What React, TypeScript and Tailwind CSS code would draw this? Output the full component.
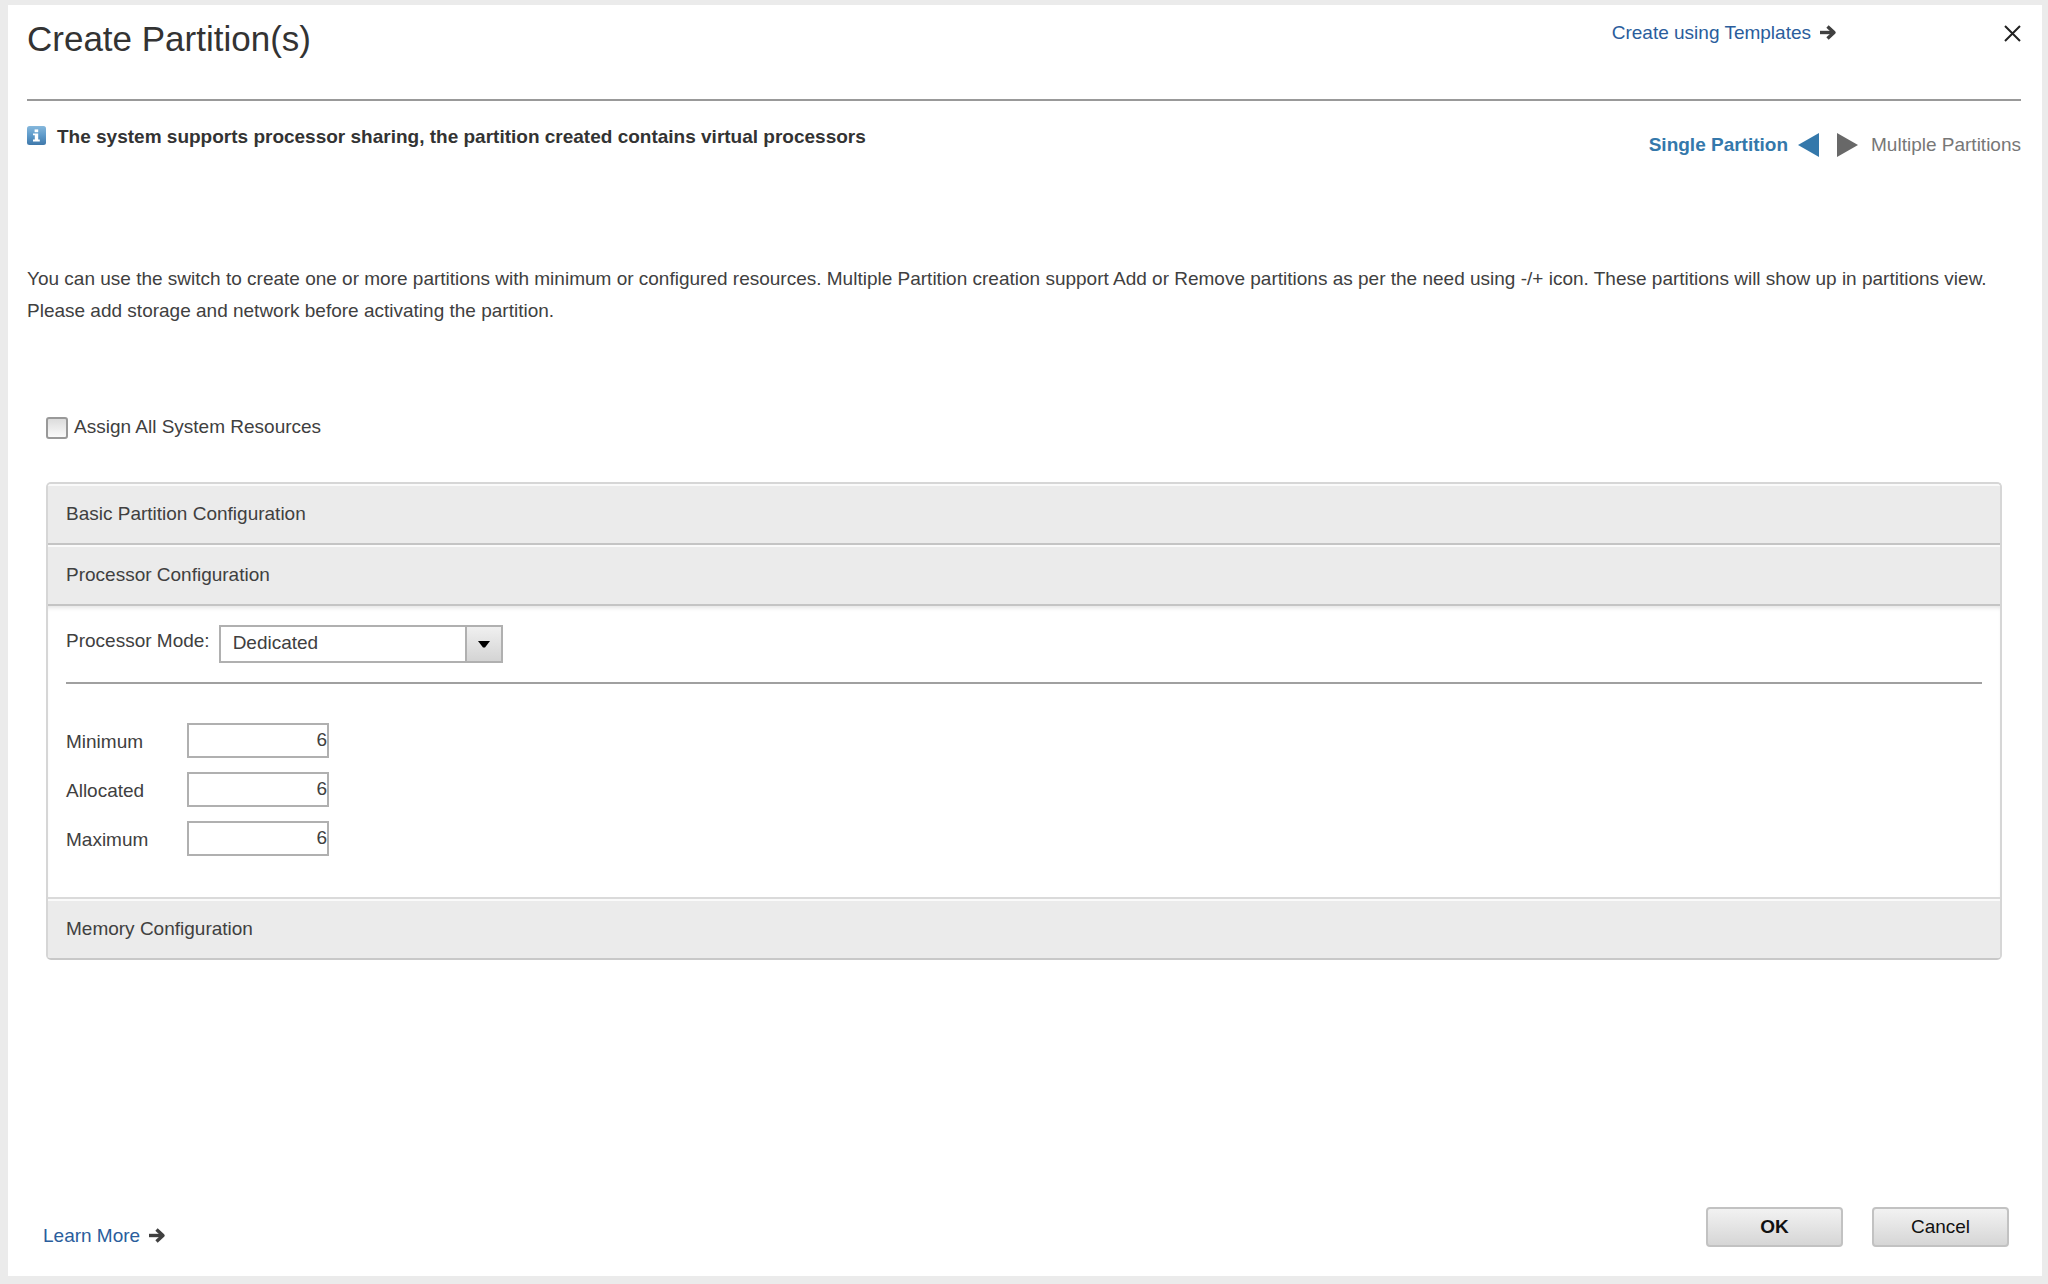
import { ReactNode, useState } from 'react'
import clsx from 'clsx'

const SECTIONS = ['Basic Partition Configuration', 'Processor Configuration', 'Memory Configuration']

const ArrowIcon = () => (
  <svg width="17" height="16" viewBox="0 0 17 16" fill="none" stroke="#404040" strokeWidth="3.4">
    <path d="M0 7.5H14" />
    <path d="M7.5 1.5L14 7.5L7.5 13.5" strokeLinejoin="round" />
  </svg>
)

const InfoIcon = () => (
  <svg className="mt-px" width="19" height="19" viewBox="0 0 19 19">
    <defs>
      <linearGradient id="info-fill" x1="0" y1="0" x2="0" y2="1">
        <stop offset="0" stopColor="#86b8dc" />
        <stop offset="0.5" stopColor="#5e9aca" />
        <stop offset="1" stopColor="#3f78aa" />
      </linearGradient>
    </defs>
    <rect width="19" height="19" rx="2.5" fill="url(#info-fill)" />
    <rect x="7.6" y="3.4" width="3.6" height="2.8" fill="#fff" />
    <path d="M6 7.4H11.2V13.6H12.8V15.6H6V13.6H7.8V9.3H6Z" fill="#fff" />
  </svg>
)

const Section = ({
  title,
  open,
  onToggle,
  children
}: {
  title: string
  open: boolean
  onToggle: () => void
  children?: ReactNode
}) => {
  return (
    <section className={clsx('border-b-2 last:border-b-0', open ? 'border-[#dadada]' : 'border-[#c4c4c4]')}>
      <h2>
        <button
          type="button"
          aria-expanded={open}
          onClick={onToggle}
          className="block w-full border-t-2 border-[#fafafa] bg-[#ebebeb] px-[18px] pt-4 pb-[17px] text-left"
        >
          {title}
        </button>
      </h2>
      {open && children && (
        <div className="border-t-2 border-[#c4c4c4] bg-white px-[18px] pt-[19px] pb-[41px] shadow-[inset_0_4px_4px_-2px_#e4e4e4]">
          {children}
        </div>
      )}
    </section>
  )
}

const ProcessorForm = () => {
  const [mode, setMode] = useState('Dedicated')
  const [values, setValues] = useState({ Minimum: '6', Allocated: '6', Maximum: '6' })

  return (
    <>
      <div className="flex items-start">
        <label htmlFor="mode" className="pt-1">
          Processor Mode:
        </label>
        <div className="relative ml-[9px] w-[284px]">
          <select
            id="mode"
            value={mode}
            onChange={(e) => setMode(e.target.value)}
            className="block h-[38px] w-full appearance-none border-2 border-[#b0b0b0] bg-white pb-[2px] pl-3 leading-6"
          >
            <option>Dedicated</option>
            <option>Shared</option>
          </select>
          <span className="pointer-events-none absolute inset-y-[2px] right-[2px] flex w-9 items-center justify-center border-l-2 border-[#b0b0b0] bg-linear-to-b from-[#f0f0f0] to-[#d4d4d4]">
            <svg width="12" height="7" viewBox="0 0 12 7">
              <path d="M0 0H12L7 6.5H5Z" fill="#000" />
            </svg>
          </span>
        </div>
      </div>
      <hr className="mt-[19px] mb-[39px] border-t-2 border-[#a0a0a0]" />
      <div className="flex flex-col gap-[14px]">
        {(Object.keys(values) as (keyof typeof values)[]).map((name) => (
          <div key={name} className="flex items-center">
            <label htmlFor={name} className="w-[121px] pt-[2px]">
              {name}
            </label>
            <input
              id={name}
              type="text"
              value={values[name]}
              onChange={(e) => setValues({ ...values, [name]: e.target.value })}
              className="h-[35px] w-[142px] border-2 border-[#b0b0b0] bg-white pb-px text-right"
            />
          </div>
        ))}
      </div>
    </>
  )
}

const App = () => {
  const [openSection, setOpenSection] = useState('Processor Configuration')
  const [single, setSingle] = useState(true)

  return (
    <div className="flex min-h-screen flex-col bg-[#ebebeb] pt-[5px] pr-[6px] pb-2 pl-2 font-['Liberation_Sans',Arial,sans-serif] text-[19px] leading-6 text-[#404040]">
      <main className="flex flex-1 flex-col bg-white pr-[21px] pl-[19px]">
        <header className="flex h-[96px] items-start border-b-2 border-[#999] pt-[14px]">
          <h1 className="text-[35px] leading-10 text-[#333]">Create Partition(s)</h1>
          <a href="#templates" className="mt-[2px] ml-auto flex items-center gap-[9px] text-[#2a5d9c]">
            Create using Templates
            <ArrowIcon />
          </a>
          <button type="button" aria-label="Close" className="mt-[6px] ml-[167px]">
            <svg width="17" height="17" viewBox="0 0 17 17" fill="none" stroke="#222" strokeWidth="2">
              <path d="M1 1L16 16M16 1L1 16" />
            </svg>
          </button>
        </header>

        <div className="flex items-start justify-between pt-6">
          <p className="flex items-start gap-[11px] font-bold text-[#333]">
            <InfoIcon />
            The system supports processor sharing, the partition created contains virtual processors
          </p>
          <div className="flex items-center pt-2">
            <button
              type="button"
              onClick={() => setSingle(true)}
              className={clsx('flex items-center gap-[10px]', single ? 'font-bold text-[#3478ab]' : 'text-[#777]')}
            >
              Single Partition
              <svg width="21" height="24" viewBox="0 0 21 24" fill="currentColor">
                <path d="M0 12L21 0V24Z" />
              </svg>
            </button>
            <button
              type="button"
              onClick={() => setSingle(false)}
              className={clsx('ml-[18px] flex items-center gap-[13px]', single ? 'text-[#777]' : 'font-bold text-[#3478ab]')}
            >
              <svg width="21" height="24" viewBox="0 0 21 24" fill={single ? '#686868' : 'currentColor'}>
                <path d="M21 12L0 0V24Z" />
              </svg>
              Multiple Partitions
            </button>
          </div>
        </div>

        <p className="mt-[106px] leading-8">
          You can use the switch to create one or more partitions with minimum or configured resources. Multiple
          Partition creation support Add or Remove partitions as per the need using -/+ icon. These partitions will show
          up in partitions view. Please add storage and network before activating the partition.
        </p>

        <div className="mt-[88px] flex items-start gap-[6px] pl-[19px]">
          <input
            id="assign-all"
            type="checkbox"
            className="mt-[2px] size-[22px] appearance-none rounded-[3px] border-2 border-[#999] bg-linear-to-b from-[#dcdcdc] to-[#fafafa] checked:bg-[#3478ab]"
          />
          <label htmlFor="assign-all">Assign All System Resources</label>
        </div>

        <div className="mx-[19px] mt-[43px] overflow-hidden rounded-[5px] border-2 border-[#d6d6d6] border-b-[#c8c8c8]">
          {SECTIONS.map((title) => (
            <Section
              key={title}
              title={title}
              open={openSection === title}
              onToggle={() => setOpenSection(openSection === title ? '' : title)}
            >
              {title === 'Processor Configuration' && <ProcessorForm />}
            </Section>
          ))}
        </div>

        <footer className="mt-auto flex items-center justify-between pr-[12px] pb-7 pl-4">
          <a href="#learn-more" className="flex items-center gap-[9px] pt-[18px] text-[#2a5d9c]">
            Learn More
            <ArrowIcon />
          </a>
          <div className="flex gap-[29px] text-[#111]">
            <button
              type="button"
              className="h-10 w-[137px] rounded-[4px] border-2 border-[#c2c2c2] bg-linear-to-b from-[#f2f2f2] to-[#d6d6d6] font-bold"
            >
              OK
            </button>
            <button
              type="button"
              className="h-10 w-[137px] rounded-[4px] border-2 border-[#c2c2c2] bg-linear-to-b from-[#f2f2f2] to-[#d6d6d6]"
            >
              Cancel
            </button>
          </div>
        </footer>
      </main>
    </div>
  )
}

export default App
